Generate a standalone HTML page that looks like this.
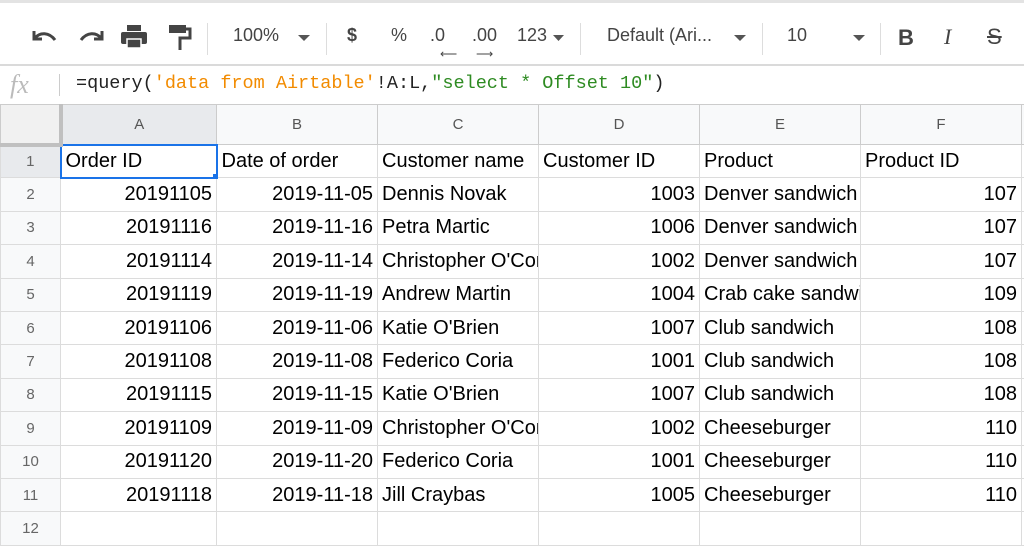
<!DOCTYPE html>
<html><head><style>
*{margin:0;padding:0;box-sizing:border-box}
body{width:1024px;height:544px;overflow:hidden;background:#fff;font-family:"Liberation Sans",Arial,sans-serif;position:relative}
.tb{position:absolute;left:0;top:0;width:1024px;height:66px;border-top:3px solid #e3e3e3;border-bottom:2px solid #dadada;background:#fff}
.t{position:absolute;top:22px;font-size:18px;color:#444}
.sep{position:absolute;top:20px;width:1px;height:32px;background:#ddd}
.fb{position:absolute;left:0;top:66px;width:1024px;height:39px;border-bottom:1px solid #cfcfcf}
.grid{position:absolute;left:0;top:104px}
table{border-collapse:collapse;table-layout:fixed;width:1031px}
td{border:1px solid #dcdcdc;height:33.4px;font-size:20px;color:#000;padding:0 4px;white-space:nowrap;overflow:hidden}
td.r{text-align:right}
td.h{background:#f8f9fa;color:#666;text-align:center;font-size:15px}
tr.hd td{height:40px;background:#f8f9fa;color:#555;text-align:center;font-size:15px;border-color:#ccc}
</style></head><body>
<div class="tb">
<svg style="position:absolute;left:30px;top:24px" width="30" height="20" viewBox="0 0 30 20"><path d="M4 4v8h8" fill="none" stroke="#444" stroke-width="3"/><path d="M5 11c5-6 14-6 20 2" fill="none" stroke="#444" stroke-width="3"/></svg>
<svg style="position:absolute;left:76px;top:24px" width="30" height="20" viewBox="0 0 30 20"><path d="M26 4v8h-8" fill="none" stroke="#444" stroke-width="3"/><path d="M25 11c-5-6-14-6-20 2" fill="none" stroke="#444" stroke-width="3"/></svg>
<svg style="position:absolute;left:120px;top:21px" width="28" height="26" viewBox="0 0 28 26"><rect x="7" y="1" width="14" height="6" fill="#444"/><rect x="1" y="8" width="26" height="12" rx="2" fill="#444"/><rect x="7" y="15" width="14" height="9" fill="#444" stroke="#fff" stroke-width="1.5"/></svg>
<svg style="position:absolute;left:168px;top:21px" width="24" height="28" viewBox="0 0 24 28"><rect x="1" y="1" width="17" height="8" fill="#444"/><path d="M18 5h4v9h-10v12" fill="none" stroke="#444" stroke-width="3"/></svg>
<div class="sep" style="left:207px"></div>
<div class="t" style="left:233px">100%</div>
<svg style="position:absolute;left:298px;top:32px" width="12" height="7"><path d="M0 0h12L6 6z" fill="#555"/></svg>
<div class="sep" style="left:326px"></div>
<div class="t" style="left:347px;font-weight:bold">$</div>
<div class="t" style="left:391px">%</div>
<div class="t" style="left:430px">.0</div>
<div class="t" style="left:472px">.00</div>
<div style="position:absolute;left:440px;top:44px;font-size:12px;color:#444">⟵</div>
<div style="position:absolute;left:476px;top:44px;font-size:12px;color:#444">⟶</div>
<div class="t" style="left:517px">123</div>
<svg style="position:absolute;left:553px;top:32px" width="11" height="6"><path d="M0 0h11L5.5 6z" fill="#555"/></svg>
<div class="sep" style="left:580px"></div>
<div class="t" style="left:607px">Default (Ari...</div>
<svg style="position:absolute;left:734px;top:32px" width="12" height="7"><path d="M0 0h12L6 6z" fill="#555"/></svg>
<div class="sep" style="left:762px"></div>
<div class="t" style="left:787px">10</div>
<svg style="position:absolute;left:853px;top:32px" width="12" height="7"><path d="M0 0h12L6 6z" fill="#555"/></svg>
<div class="sep" style="left:880px"></div>
<div class="t" style="left:898px;font-weight:bold;font-size:22px;top:22px">B</div>
<div class="t" style="left:944px;font-style:italic;font-size:22px;font-family:'Liberation Serif',serif;top:21px">I</div>
<div class="t" style="left:987px;font-size:22px;text-decoration:line-through;top:21px">S</div>
</div>
<div class="fb">
<div style="position:absolute;left:10px;top:4px;font-family:'Liberation Serif',serif;font-style:italic;font-size:26px;color:#bbb">fx</div>
<div style="position:absolute;left:59px;top:8px;width:1px;height:22px;background:#ccc"></div>
<div style="position:absolute;left:76px;top:7px;font-family:'Liberation Mono',monospace;font-size:18.5px;color:#222">=query(<span style="color:#f28b00">'data from Airtable'</span>!A:L,<span style="color:#2e8b22">"select * Offset 10"</span>)</div>
</div>
<div class="grid">
<table>
<colgroup><col style="width:60px"><col style="width:156px"><col style="width:161px"><col style="width:161px"><col style="width:161px"><col style="width:161px"><col style="width:161px"><col style="width:10px"></colgroup>
<tr class="hd"><td style="background:#f1f1f1;border-right:4px solid #c0c0c0;border-bottom:4px solid #c0c0c0"></td><td style="background:#e8eaed">A</td><td>B</td><td>C</td><td>D</td><td>E</td><td>F</td><td></td></tr>
<tr><td class="h" style="background:#e8eaed">1</td><td style="border:2px solid #1a73e8;position:relative">Order ID<div style="position:absolute;right:-4px;bottom:-4px;width:7px;height:7px;background:#1a73e8"></div></td><td>Date of order</td><td>Customer name</td><td>Customer ID</td><td>Product</td><td>Product ID</td><td></td></tr>
<tr><td class="h">2</td><td class="r">20191105</td><td class="r">2019-11-05</td><td>Dennis Novak</td><td class="r">1003</td><td>Denver sandwich</td><td class="r">107</td><td></td></tr>
<tr><td class="h">3</td><td class="r">20191116</td><td class="r">2019-11-16</td><td>Petra Martic</td><td class="r">1006</td><td>Denver sandwich</td><td class="r">107</td><td></td></tr>
<tr><td class="h">4</td><td class="r">20191114</td><td class="r">2019-11-14</td><td>Christopher O'Connell</td><td class="r">1002</td><td>Denver sandwich</td><td class="r">107</td><td></td></tr>
<tr><td class="h">5</td><td class="r">20191119</td><td class="r">2019-11-19</td><td>Andrew Martin</td><td class="r">1004</td><td>Crab cake sandwich</td><td class="r">109</td><td></td></tr>
<tr><td class="h">6</td><td class="r">20191106</td><td class="r">2019-11-06</td><td>Katie O'Brien</td><td class="r">1007</td><td>Club sandwich</td><td class="r">108</td><td></td></tr>
<tr><td class="h">7</td><td class="r">20191108</td><td class="r">2019-11-08</td><td>Federico Coria</td><td class="r">1001</td><td>Club sandwich</td><td class="r">108</td><td></td></tr>
<tr><td class="h">8</td><td class="r">20191115</td><td class="r">2019-11-15</td><td>Katie O'Brien</td><td class="r">1007</td><td>Club sandwich</td><td class="r">108</td><td></td></tr>
<tr><td class="h">9</td><td class="r">20191109</td><td class="r">2019-11-09</td><td>Christopher O'Connell</td><td class="r">1002</td><td>Cheeseburger</td><td class="r">110</td><td></td></tr>
<tr><td class="h">10</td><td class="r">20191120</td><td class="r">2019-11-20</td><td>Federico Coria</td><td class="r">1001</td><td>Cheeseburger</td><td class="r">110</td><td></td></tr>
<tr><td class="h">11</td><td class="r">20191118</td><td class="r">2019-11-18</td><td>Jill Craybas</td><td class="r">1005</td><td>Cheeseburger</td><td class="r">110</td><td></td></tr>
<tr><td class="h">12</td><td></td><td></td><td></td><td></td><td></td><td></td><td></td></tr>
</table>
</div>
</body></html>
